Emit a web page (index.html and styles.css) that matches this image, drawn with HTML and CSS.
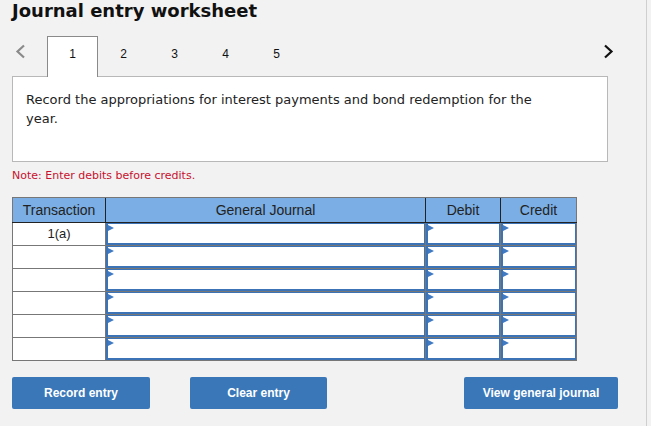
FILE: index.html
```html
<!DOCTYPE html>
<html>
<head>
<meta charset="utf-8">
<link rel="stylesheet" href="styles.css">
</head>
<body>
<div class="page">
  <h1 class="title">Journal entry worksheet</h1>
  <div class="tabs">
    <span class="arrow prev"><svg width="11" height="15" viewBox="0 0 11 15"><path d="M9 1.5 L2.5 7.5 L9 13.5" fill="none" stroke="#8a8a8a" stroke-width="2.2"/></svg></span>
    <span class="tab active">1</span>
    <span class="tab">2</span>
    <span class="tab">3</span>
    <span class="tab">4</span>
    <span class="tab">5</span>
    <span class="spacer"></span>
    <span class="arrow next"><svg width="11" height="15" viewBox="0 0 11 15"><path d="M2 1.5 L8.5 7.5 L2 13.5" fill="none" stroke="#111" stroke-width="2.2"/></svg></span>
  </div>
  <div class="prompt">Record the appropriations for interest payments and bond redemption for the year.</div>
  <div class="note">Note: Enter debits before credits.</div>
  <table class="journal">
    <colgroup><col class="c-tr"><col class="c-gj"><col class="c-dr"><col class="c-cr"></colgroup>
    <thead>
      <tr><th>Transaction</th><th>General Journal</th><th>Debit</th><th>Credit</th></tr>
    </thead>
    <tbody>
      <tr><td class="tr">1(a)</td><td class="in"><div class="box"></div></td><td class="in"><div class="box"></div></td><td class="in"><div class="box"></div></td></tr>
      <tr><td class="tr"></td><td class="in"><div class="box"></div></td><td class="in"><div class="box"></div></td><td class="in"><div class="box"></div></td></tr>
      <tr><td class="tr"></td><td class="in"><div class="box"></div></td><td class="in"><div class="box"></div></td><td class="in"><div class="box"></div></td></tr>
      <tr><td class="tr"></td><td class="in"><div class="box"></div></td><td class="in"><div class="box"></div></td><td class="in"><div class="box"></div></td></tr>
      <tr><td class="tr"></td><td class="in"><div class="box"></div></td><td class="in"><div class="box"></div></td><td class="in"><div class="box"></div></td></tr>
      <tr><td class="tr"></td><td class="in"><div class="box"></div></td><td class="in"><div class="box"></div></td><td class="in"><div class="box"></div></td></tr>
    </tbody>
  </table>
  <div class="actions">
    <button class="btn btn-record">Record entry</button>
    <button class="btn btn-clear">Clear entry</button>
    <span class="spacer"></span>
    <button class="btn btn-view">View general journal</button>
  </div>
</div>
</body>
</html>
```
FILE: styles.css
```css
html, body {
  margin: 0;
  padding: 0;
  background: #f2f2f2;
}
.page {
  width: 634px;
  height: 426px;
  padding-left: 12px;
  border-right: 1px solid #cfcfcf;
  box-sizing: content-box;
  font-family: "DejaVu Sans", Verdana, sans-serif;
  color: #222;
}
.title {
  margin: 0;
  padding-top: 0;
  font-size: 18px;
  line-height: 22px;
  font-weight: bold;
  color: #111;
}
.tabs {
  display: flex;
  align-items: stretch;
  margin-top: 14px;
  height: 40px;
  position: relative;
  z-index: 1;
  width: 607px;
}
.arrow {
  display: flex;
  justify-content: center;
  padding-top: 8px;
}
.arrow.prev {
  width: 35px;
  justify-content: flex-start;
  padding-left: 3px;
  box-sizing: border-box;
}
.arrow.next {
  width: 22px;
}
.tab {
  width: 51px;
  box-sizing: border-box;
  border: 1px solid transparent;
  border-bottom: none;
  text-align: center;
  font-family: "Liberation Sans", Arial, sans-serif;
  font-size: 12px;
  padding-top: 10px;
  color: #111;
}
.tab.active {
  background: #fff;
  border-color: #8a8a8a;
  height: 41px;
}
.spacer { flex: 1; }
.prompt {
  width: 596px;
  height: 86px;
  box-sizing: border-box;
  background: #fff;
  border: 1px solid #b8b8b8;
  padding: 13px 40px 0 13px;
  font-size: 13px;
  line-height: 19px;
  color: #222;
}
.note {
  margin-top: 6px;
  font-size: 11px;
  line-height: 16px;
  color: #c8102e;
}
.journal {
  margin-top: 13px;
  border-collapse: collapse;
  width: 564px;
  table-layout: fixed;
  font-family: "Liberation Sans", Arial, sans-serif;
  font-size: 13px;
  border: 1px solid #777;
}
.c-tr { width: 93px; }
.c-gj { width: 320px; }
.c-dr { width: 75px; }
.c-cr { width: 76px; }
.journal th {
  background: #7aaee4;
  color: #222;
  font-weight: normal;
  font-size: 14px;
  height: 24px;
  padding: 0;
  border-left: 1px solid #222;
  border-bottom: 1px solid #222;
  border-top: 1px solid #777;
}
.journal th:first-child { border-left: 1px solid #777; }
.journal td {
  height: 22px;
  padding: 0;
  border: 1px solid #777;
  background: #fff;
}
.journal td.tr {
  text-align: center;
  vertical-align: top;
  padding-top: 3px;
  height: 19px;
}
.journal td.in {
  vertical-align: top;
}
.box {
  height: 22px;
  box-sizing: border-box;
  border-top: 1px solid #3c72b6;
  border-left: 2px solid #3c72b6;
  border-right: 1px solid #3c72b6;
  border-bottom: 2px solid #3c72b6;
  position: relative;
}
.box::before {
  content: "";
  position: absolute;
  left: 0;
  top: 1px;
  border-left: 6px solid #3f7ac2;
  border-top: 3px solid transparent;
  border-bottom: 3px solid transparent;
}
.actions {
  display: flex;
  margin-top: 16px;
  width: 606px;
}
.btn {
  height: 32px;
  border: none;
  border-radius: 2px;
  background: #3a77b9;
  color: #fff;
  font-family: "Liberation Sans", Arial, sans-serif;
  font-weight: bold;
  font-size: 12px;
  padding: 0;
}
.btn-record { width: 138px; }
.btn-clear { width: 137px; margin-left: 40px; }
.btn-view { width: 154px; }
```
